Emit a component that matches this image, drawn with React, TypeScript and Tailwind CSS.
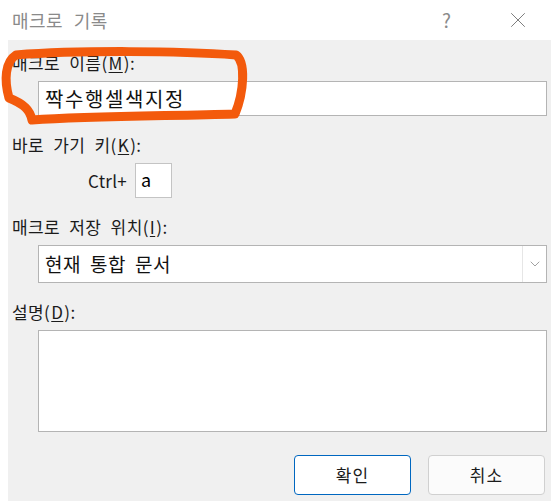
import { ChevronDown, X } from "lucide-react";

const font = {
  fontFamily: '"Noto Sans CJK KR", "Noto Sans", sans-serif',
};

// 밑줄 있는 단축키 문자
function Key({ k }: { k: string }) {
  return <span className="mx-[1px] underline underline-offset-2">{k}</span>;
}

function Label({ children, className = "" }: { children: React.ReactNode; className?: string }) {
  return (
    <div className={`ml-1 h-6 text-[17px] leading-6 tracking-[0.4px] text-[#1b1b1b] [word-spacing:5px] ${className}`}>
      {children}
    </div>
  );
}

export default function App() {
  return (
    <div className="relative h-[501px] w-[551px] overflow-hidden bg-white" style={font}>
      {/* 타이틀 바 */}
      <div className="flex h-10 items-center bg-white pl-3">
        <span className="text-[18px] tracking-[0.5px] text-[#8a8a8a] [word-spacing:6px]">매크로 기록</span>
        <span className="ml-auto mr-[54px] text-[19px] text-[#8a8a8a]">?</span>
        <X className="mr-[20px] h-[26px] w-[26px] text-[#7a7a7a]" strokeWidth={0.9} />
      </div>

      {/* 본문 */}
      <div className="ml-2 flex h-[461px] flex-col bg-[#f0f0f0] pt-[11px]">
        <Label>
          매크로 이름(<Key k="M" />):
        </Label>
        <div className="ml-[30px] mr-1 mt-[6px] flex h-[35px] items-center border border-[#b4b4b4] bg-white pl-[6px] text-[20px] tracking-[1.6px] text-[#111]">
          짝수행셀색지정
        </div>

        <Label className="mt-[17px]">
          바로 가기 키(<Key k="K" />):
        </Label>
        <div className="mt-[6px] flex h-[35px] items-center">
          <span className="ml-[80px] text-[17px] tracking-[0.3px] text-[#1b1b1b]">Ctrl+</span>
          <div className="ml-[8px] flex h-[35px] w-[37px] items-start border border-[#c4c4c4] bg-white pl-[5px] pt-[3px] text-[18px] leading-6">
            a
          </div>
        </div>

        <Label className="mt-[17px]">
          매크로 저장 위치(<Key k="I" />):
        </Label>
        <div className="ml-[30px] mr-1 mt-[6px] flex h-[38px] items-center border border-[#b4b4b4] bg-white">
          <span className="pl-[6px] text-[19px] tracking-[0.6px] text-[#111] [word-spacing:4px]">현재 통합 문서</span>
          <div className="ml-auto flex h-full w-[24px] items-center justify-center border-l border-[#e6e6e6]">
            <ChevronDown className="h-4 w-4 text-[#8a8a8a]" strokeWidth={1.2} />
          </div>
        </div>

        <Label className="mt-[17px]">
          설명(<Key k="D" />):
        </Label>
        <div className="ml-[30px] mr-1 mt-[6px] h-[102px] border border-[#b4b4b4] bg-white" />

        <div className="mr-[6px] mt-[23px] flex justify-end gap-[17px]">
          <button className="h-[40px] w-[117px] rounded-[4px] border border-[#0067c0] bg-white text-[17px] tracking-[1px] text-[#1b1b1b]">
            확인
          </button>
          <button className="h-[40px] w-[117px] rounded-[4px] border border-[#d0d0d0] bg-[#fbfbfb] text-[17px] tracking-[1px] text-[#1b1b1b]">
            취소
          </button>
        </div>
      </div>

      {/* 주황색 손글씨 표시 */}
      <svg
        className="pointer-events-none absolute left-0 top-0"
        width="551"
        height="501"
        viewBox="0 0 551 501"
        fill="none"
      >
        <path
          d="M 16 55 C 80 50, 180 51, 236 55 C 246 62, 244 92, 235 114 C 170 116, 90 116, 32 120 C 30 110, 24 104, 9 98 C 4 80, 5 62, 16 55 Z"
          stroke="#f35a0c"
          strokeWidth="9"
          strokeLinejoin="round"
          strokeLinecap="round"
        />
      </svg>
    </div>
  );
}
